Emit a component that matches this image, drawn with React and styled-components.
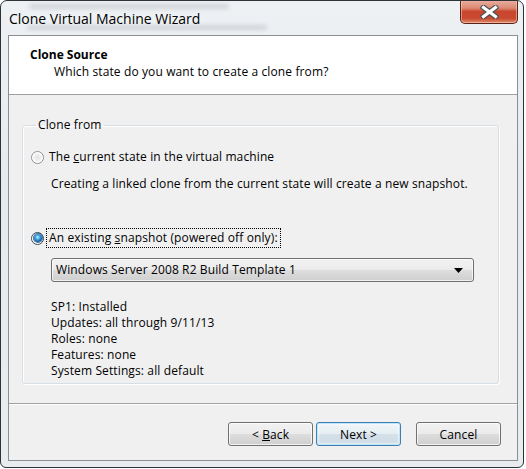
import React from "react";
import styled, { createGlobalStyle, css } from "styled-components";

const GlobalStyle = createGlobalStyle`
  * { box-sizing: border-box; }
  html, body {
    margin: 0;
    padding: 0;
    background: #ffffff;
    font-family: "Open Sans", "Noto Sans", sans-serif;
    font-size: 12px;
    letter-spacing: 0.12px;
    color: #000;
  }
`;

const Window = styled.div`
  position: relative;
  width: 524px;
  height: 468px;
  display: flex;
  flex-direction: column;
  border: 1px solid #2e3338;
  border-radius: 7px 7px 6px 6px;
  background: linear-gradient(180deg, #eef1f4 0%, #e6eaee 40%, #e9ecef 100%);
  overflow: hidden;
`;

const TitleBar = styled.div`
  position: relative;
  height: 34px;
  display: flex;
  align-items: flex-start;
  justify-content: space-between;
  padding-left: 8px;
`;

/* blurred shapes of whatever sits behind the glass */
const Smudge = styled.span`
  position: absolute;
  left: ${(p) => p.$left}px;
  top: ${(p) => p.$top}px;
  width: ${(p) => p.$width}px;
  height: 5px;
  border-radius: 3px;
  background: rgba(60, 70, 80, 0.16);
  filter: blur(2px);
  pointer-events: none;
`;

const Title = styled.div`
  position: relative;
  margin-top: 8px;
  font-size: 14px;
  letter-spacing: 0;
  line-height: 20px;
  color: #000;
  text-shadow: 0 0 8px rgba(255, 255, 255, 0.9);
`;

const CloseButton = styled.div`
  position: relative;
  width: 58px;
  height: 24px;
  margin-top: -1px;
  margin-right: 5px;
  display: flex;
  align-items: center;
  justify-content: center;
  border: 1px solid #5a2218;
  border-top: none;
  border-radius: 0 0 5px 5px;
  background: linear-gradient(
    180deg,
    #eab1a2 0%,
    #dc8a74 35%,
    #c9462d 50%,
    #c94a30 80%,
    #e08f6e 100%
  );
  box-shadow: inset 0 0 0 1px rgba(255, 210, 190, 0.55);
`;

const Client = styled.div`
  flex: 1;
  margin: 0 5px 6px 7px;
  display: flex;
  flex-direction: column;
  border: 1px solid #8a8f94;
  background: #f0f0f0;
`;

const Header = styled.div`
  background: #ffffff;
  padding: 11px 0 14px 21px;
  border-bottom: 1px solid #a0a0a0;
  line-height: 16px;
`;

const HeaderTitle = styled.div`
  font-weight: 700;
  letter-spacing: 0;
`;

const HeaderSub = styled.div`
  padding-left: 24px;
  margin-top: 1px;
`;

const Body = styled.div`
  flex: 1;
  padding: 22px 18px 0 13px;
`;

const Group = styled.fieldset`
  margin: 0;
  padding: 16px 10px 4px 8px;
  border: 1px solid #d5dfe5;
  border-radius: 3px;
  box-shadow: inset 1px 1px 0 #ffffff, 1px 1px 0 #ffffff;
  line-height: 16px;
`;

const Legend = styled.legend`
  padding: 0 2px;
  margin-left: 5px;
  line-height: 16px;
`;

const RadioRow = styled.div`
  display: flex;
  align-items: center;
  height: 16px;
  margin-top: ${(p) => p.$top || 0}px;
`;

const RadioCircle = styled.span`
  position: relative;
  width: 13px;
  height: 13px;
  flex: none;
  border-radius: 50%;
  border: 1px solid #8e9195;
  background: radial-gradient(circle at 50% 50%, #e2e2e2 0%, #f2f2f2 45%, #ffffff 75%);
  box-shadow: inset 0 0 0 1px #ffffff;
  ${(p) =>
    p.$checked &&
    css`
      border-color: #3a4e64;
      &::after {
        content: "";
        position: absolute;
        left: 1.5px;
        top: 1.5px;
        width: 8px;
        height: 8px;
        border-radius: 50%;
        background: radial-gradient(
          circle at 45% 40%,
          #c8f4ff 0%,
          #45b2ee 30%,
          #1669b0 62%,
          #0b3563 100%
        );
        box-shadow: 0 0 0 1px rgba(16, 48, 90, 0.7);
      }
    `}
`;

const RadioLabel = styled.span`
  margin-left: 4px;
  padding: 0 1px;
  white-space: nowrap;
  ${(p) =>
    p.$focused &&
    css`
      outline: 1px dotted #000;
      outline-offset: 1px;
    `}
`;

const Indented = styled.div`
  padding-left: 20px;
  margin-top: ${(p) => p.$top || 0}px;
`;

const Select = styled.div`
  width: 423px;
  height: 24px;
  margin-top: 12px;
  margin-left: 20px;
  display: flex;
  align-items: center;
  justify-content: space-between;
  padding: 0 10px 0 4px;
  border: 1px solid #707070;
  border-radius: 3px;
  background: linear-gradient(180deg, #f2f2f2 0%, #ebebeb 48%, #dddddd 52%, #cfcfcf 100%);
  box-shadow: inset 0 0 0 1px rgba(255, 255, 255, 0.7);
`;

const Arrow = styled.svg`
  width: 9px;
  height: 5px;
  flex: none;
`;

const InfoList = styled.div`
  margin-top: 17px;
  padding-left: 20px;
  line-height: 16px;
`;

const Footer = styled.div`
  height: 57px;
  display: flex;
  justify-content: flex-end;
  align-items: flex-start;
  padding: 18px 16px 0 0;
  border-top: 1px solid #a0a0a0;
  box-shadow: inset 0 1px 0 #ffffff;
`;

const Button = styled.div`
  width: 85px;
  height: 24px;
  display: flex;
  align-items: center;
  justify-content: center;
  white-space: pre;
  margin-left: ${(p) => p.$gap || 0}px;
  border: 1px solid #707070;
  border-radius: 3px;
  background: linear-gradient(180deg, #f2f2f2 0%, #ebebeb 48%, #dddddd 52%, #cfcfcf 100%);
  box-shadow: inset 0 0 0 1px rgba(255, 255, 255, 0.75);
  ${(p) =>
    p.$default &&
    css`
      border-color: #3c7fb1;
      background: linear-gradient(180deg, #f0f5f8 0%, #e6eef3 48%, #d5e1e9 52%, #cddbe4 100%);
      box-shadow: inset 0 0 0 1px #bfe6fa, inset 0 0 2px 2px rgba(255, 255, 255, 0.5);
    `}
`;

const CloseGlyph = () => (
  <svg width="19" height="14" viewBox="0 0 19 14">
    <path d="M3.5 2.5 L15.5 11.5 M15.5 2.5 L3.5 11.5" stroke="#4b4f55" strokeWidth="5.4" strokeLinecap="square" />
    <path d="M3.5 2.5 L15.5 11.5 M15.5 2.5 L3.5 11.5" stroke="#ffffff" strokeWidth="3.2" strokeLinecap="square" />
  </svg>
);

const info = [
  "SP1: Installed",
  "Updates: all through 9/11/13",
  "Roles: none",
  "Features: none",
  "System Settings: all default",
];

export default function App() {
  return (
    <>
      <GlobalStyle />
      <Window>
        <TitleBar>
          <Smudge $left={28} $top={3} $width={200} />
          <Smudge $left={26} $top={24} $width={240} />
          <Title>Clone Virtual Machine Wizard</Title>
          <CloseButton>
            <CloseGlyph />
          </CloseButton>
        </TitleBar>
        <Client>
          <Header>
            <HeaderTitle>Clone Source</HeaderTitle>
            <HeaderSub>Which state do you want to create a clone from?</HeaderSub>
          </Header>
          <Body>
            <Group>
              <Legend>Clone from</Legend>
              <RadioRow>
                <RadioCircle />
                <RadioLabel>
                  The <u>c</u>urrent state in the virtual machine
                </RadioLabel>
              </RadioRow>
              <Indented $top={11}>
                Creating a linked clone from the current state will create a new snapshot.
              </Indented>
              <RadioRow $top={38}>
                <RadioCircle $checked />
                <RadioLabel $focused>
                  An existing <u>s</u>napshot (powered off only):
                </RadioLabel>
              </RadioRow>
              <Select>
                <span>Windows Server 2008 R2 Build Template 1</span>
                <Arrow viewBox="0 0 9 5">
                  <path d="M0 0 H9 L4.5 5 Z" fill="#000" />
                </Arrow>
              </Select>
              <InfoList>
                {info.map((line) => (
                  <div key={line}>{line}</div>
                ))}
              </InfoList>
            </Group>
          </Body>
          <Footer>
            <Button>
              {"< "}
              <u>B</u>ack
            </Button>
            <Button $default $gap={3}>
              Next &gt;
            </Button>
            <Button $gap={15}>Cancel</Button>
          </Footer>
        </Client>
      </Window>
    </>
  );
}
